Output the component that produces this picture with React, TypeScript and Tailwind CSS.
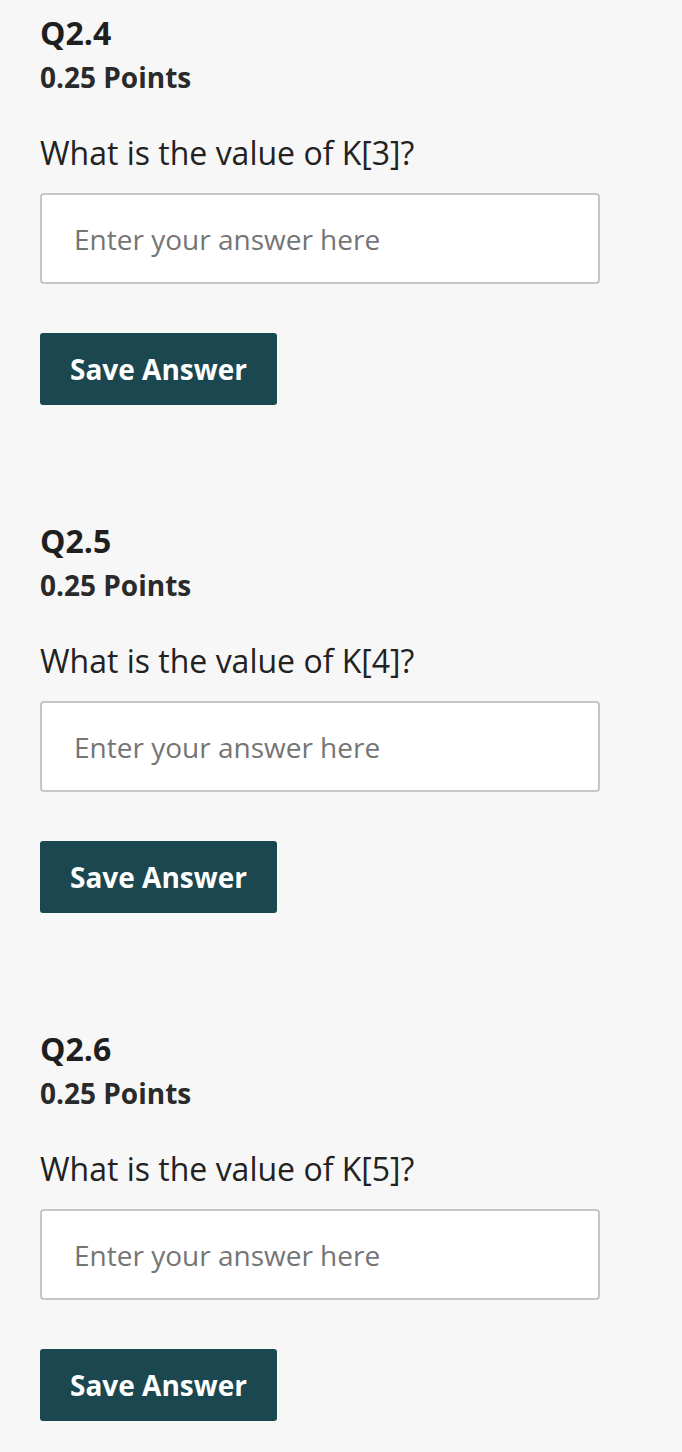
const questions = [
  { id: 'Q2.4', points: '0.25 Points', prompt: 'What is the value of K[3]?' },
  { id: 'Q2.5', points: '0.25 Points', prompt: 'What is the value of K[4]?' },
  { id: 'Q2.6', points: '0.25 Points', prompt: 'What is the value of K[5]?' },
];

function Question({ id, points, prompt }: { id: string; points: string; prompt: string }) {
  return (
    <div className="flex flex-col items-start">
      <h2 className="text-[32px] leading-[40px] font-bold text-[#1f1f1f]">{id}</h2>
      <div className="mt-[6px] text-[28px] leading-[36px] font-bold text-[#2a2a2a]">{points}</div>
      <p className="mt-[38px] text-[32px] leading-[40px] text-[#222]">{prompt}</p>
      <input
        type="text"
        placeholder="Enter your answer here"
        className="mt-[20px] block w-[560px] h-[91px] bg-white border-2 border-[#c6c6c6] rounded-[4px] pl-[32px] text-[28px] text-[#222] placeholder:text-[#757575] outline-none"
      />
      <button className="mt-[49px] flex items-center justify-center w-[237px] h-[72px] bg-[#1a4750] rounded-[3px] text-white text-[28px] font-bold">
        Save Answer
      </button>
    </div>
  );
}

export default function App() {
  return (
    <div
      className="min-h-[1452px] bg-[#f7f7f7] pl-[40px] pt-[13px] flex flex-col gap-[116px]"
      style={{ fontFamily: '"Open Sans", "Noto Sans", sans-serif' }}
    >
      {questions.map((q) => (
        <Question key={q.id} {...q} />
      ))}
    </div>
  );
}
